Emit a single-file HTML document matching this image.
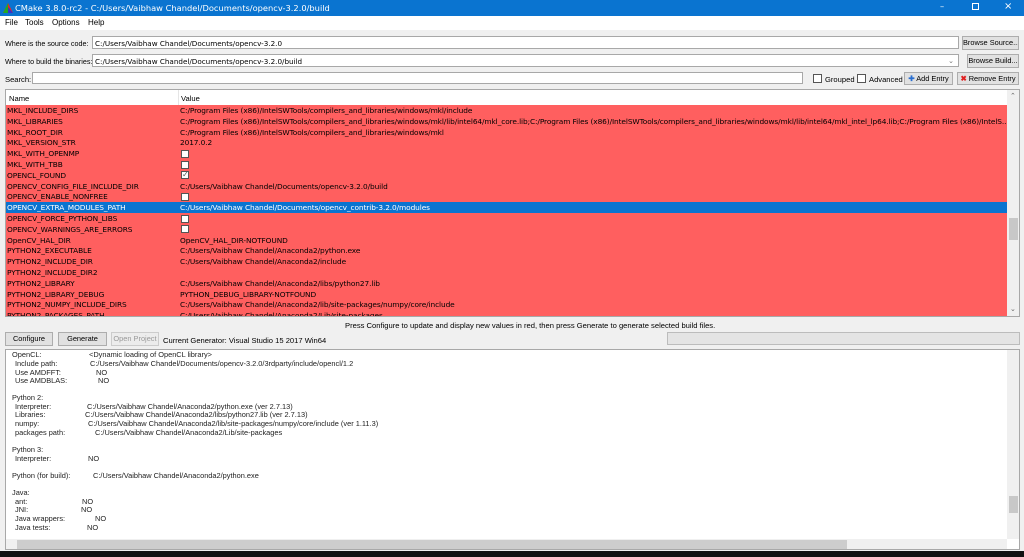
<!DOCTYPE html>
<html><head><meta charset="utf-8"><style>
*{margin:0;padding:0;box-sizing:border-box}
body{width:1024px;height:557px;overflow:hidden;background:#f0f0f0;font-family:"Liberation Sans",sans-serif;font-size:7.6px;color:#000;position:relative}
.a{position:absolute;white-space:nowrap}
.title{left:0;top:0;width:1024px;height:16px;background:#0a74d0;color:#fff;font-size:8.3px;font-family:"DejaVu Sans",sans-serif}
.box{position:absolute;background:#fff;border:1px solid #a8a8a8}
.box span{font-family:"DejaVu Sans",sans-serif;font-size:7.2px}
.btn{position:absolute;background:#e1e1e1;border:1px solid #adadad;text-align:center;line-height:12px;white-space:nowrap;overflow:hidden;font-size:7.4px}
.row{position:absolute;left:6px;width:1001px;height:10.8px;line-height:11.6px;font-family:"DejaVu Sans",sans-serif;font-size:7.4px;letter-spacing:-0.1px}
.row span{position:absolute;white-space:nowrap}
.cb{position:absolute;left:175px;width:8px;height:8px;background:#fff;border:1px solid #555;top:1.5px}
.out{position:absolute;white-space:nowrap;font-size:7.4px;color:#222}
</style></head><body>
<div class="a title"><svg style="position:absolute;left:3px;top:3px" width="10" height="10"><polygon points="5,0 10,10 0,10" fill="#e22"/><polygon points="5,0 5,10 0,10" fill="#2a2"/><polygon points="5,4 10,10 5,10" fill="#33c"/></svg><span style="position:absolute;left:15px;top:3px">CMake 3.8.0-rc2 - C:/Users/Vaibhaw Chandel/Documents/opencv-3.2.0/build</span>
<span style="position:absolute;left:940px;top:1px">&#8211;</span><span style="position:absolute;left:972px;top:3px;width:7px;height:7px;border:1px solid #fff"></span><span style="position:absolute;left:1004px;top:1px;font-size:10px">&#215;</span></div>
<div class="a" style="left:0;top:16px;width:1024px;height:14px;background:#fff"></div>
<div class="a" style="left:5px;top:18px;font-size:8px">File</div><div class="a" style="left:25px;top:18px;font-size:8px">Tools</div><div class="a" style="left:52px;top:18px;font-size:8px">Options</div><div class="a" style="left:88px;top:18px;font-size:8px">Help</div>
<div class="a" style="left:5px;top:39px;font-size:7.2px">Where is the source code:</div>
<div class="box" style="left:92px;top:36px;width:867px;height:13px"><span class="a" style="left:2px;top:2px">C:/Users/Vaibhaw Chandel/Documents/opencv-3.2.0</span></div>
<div class="btn" style="left:962px;top:36px;width:57px;height:14px">Browse Source...</div>
<div class="a" style="left:5px;top:57px;font-size:7.2px">Where to build the binaries:</div>
<div class="box" style="left:92px;top:54px;width:867px;height:13px"><span class="a" style="left:2px;top:2px">C:/Users/Vaibhaw Chandel/Documents/opencv-3.2.0/build</span><span class="a" style="left:855px;top:1px;color:#777">&#8964;</span></div>
<div class="btn" style="left:967px;top:54px;width:52px;height:14px">Browse Build...</div>
<div class="a" style="left:5px;top:75px">Search:</div>
<div class="box" style="left:32px;top:72px;width:771px;height:12px"></div>
<div class="a" style="left:813px;top:74px;width:9px;height:9px;border:1px solid #555;background:#fff"></div><div class="a" style="left:825px;top:75px">Grouped</div>
<div class="a" style="left:857px;top:74px;width:9px;height:9px;border:1px solid #555;background:#fff"></div><div class="a" style="left:869px;top:75px">Advanced</div>
<div class="btn" style="left:904px;top:72px;width:49px;height:13px"><span style="color:#2a6fd0;font-weight:bold">&#10010;</span> Add Entry</div>
<div class="btn" style="left:957px;top:72px;width:62px;height:13px"><span style="color:#e02020;font-weight:bold">&#10006;</span> Remove Entry</div>
<div class="box" style="left:5px;top:89px;width:1015px;height:228px"></div>
<div class="a" style="left:6px;top:90px;width:1001px;height:15px;background:#fff"></div>
<div class="a" style="left:178px;top:90px;width:1px;height:15px;background:#e5e5e5"></div>
<div class="a" style="left:9px;top:94px">Name</div><div class="a" style="left:181px;top:94px">Value</div>
<div class="a" style="left:6px;top:105px;width:1001px;height:211px;background:#ff5f5f;overflow:hidden">
<div id="rows"></div>
</div>
<div class="a" style="left:1007px;top:90px;width:12px;height:226px;background:#f0f0f0"></div>
<div class="a" style="left:1009px;top:218px;width:9px;height:22px;background:#c8c8c8"></div>
<div class="a" style="left:1010px;top:92px;color:#666;font-size:7px">&#8963;</div>
<div class="a" style="left:1010px;top:305px;color:#666;font-size:7px">&#8964;</div>
<div class="a" style="left:345px;top:321px">Press Configure to update and display new values in red, then press Generate to generate selected build files.</div>
<div class="btn" style="left:5px;top:332px;width:48px;height:14px">Configure</div>
<div class="btn" style="left:58px;top:332px;width:49px;height:14px">Generate</div>
<div class="btn" style="left:111px;top:332px;width:48px;height:14px;color:#999;background:#ececec;border-color:#ccc">Open Project</div>
<div class="a" style="left:163px;top:336px">Current Generator: Visual Studio 15 2017 Win64</div>
<div class="a" style="left:667px;top:332px;width:353px;height:13px;background:#e4e4e4;border:1px solid #bcbcbc"></div>
<div class="box" style="left:5px;top:349px;width:1015px;height:201px"></div>
<div class="a" style="left:1007px;top:350px;width:12px;height:189px;background:#f0f0f0"></div>
<div class="a" style="left:1009px;top:496px;width:9px;height:17px;background:#c8c8c8"></div>
<div class="a" style="left:6px;top:539px;width:1001px;height:10px;background:#f0f0f0"></div>
<div class="a" style="left:17px;top:540px;width:830px;height:9px;background:#cdcdcd"></div>
<div class="a" style="left:0;top:551px;width:1024px;height:6px;background:#111"></div>
<div id="out"></div>
<script>
var rows=[["MKL_INCLUDE_DIRS","C:/Program Files (x86)/IntelSWTools/compilers_and_libraries/windows/mkl/include"],
["MKL_LIBRARIES","C:/Program Files (x86)/IntelSWTools/compilers_and_libraries/windows/mkl/lib/intel64/mkl_core.lib;C:/Program Files (x86)/IntelSWTools/compilers_and_libraries/windows/mkl/lib/intel64/mkl_intel_lp64.lib;C:/Program Files (x86)/IntelS..."],
["MKL_ROOT_DIR","C:/Program Files (x86)/IntelSWTools/compilers_and_libraries/windows/mkl"],
["MKL_VERSION_STR","2017.0.2"],["MKL_WITH_OPENMP",0],["MKL_WITH_TBB",0],["OPENCL_FOUND",1],
["OPENCV_CONFIG_FILE_INCLUDE_DIR","C:/Users/Vaibhaw Chandel/Documents/opencv-3.2.0/build"],
["OPENCV_ENABLE_NONFREE",0],["OPENCV_EXTRA_MODULES_PATH","C:/Users/Vaibhaw Chandel/Documents/opencv_contrib-3.2.0/modules"],
["OPENCV_FORCE_PYTHON_LIBS",0],["OPENCV_WARNINGS_ARE_ERRORS",0],["OpenCV_HAL_DIR","OpenCV_HAL_DIR-NOTFOUND"],
["PYTHON2_EXECUTABLE","C:/Users/Vaibhaw Chandel/Anaconda2/python.exe"],["PYTHON2_INCLUDE_DIR","C:/Users/Vaibhaw Chandel/Anaconda2/include"],
["PYTHON2_INCLUDE_DIR2",""],["PYTHON2_LIBRARY","C:/Users/Vaibhaw Chandel/Anaconda2/libs/python27.lib"],
["PYTHON2_LIBRARY_DEBUG","PYTHON_DEBUG_LIBRARY-NOTFOUND"],["PYTHON2_NUMPY_INCLUDE_DIRS","C:/Users/Vaibhaw Chandel/Anaconda2/lib/site-packages/numpy/core/include"],
["PYTHON2_PACKAGES_PATH","C:/Users/Vaibhaw Chandel/Anaconda2/Lib/site-packages"]];
var h="";rows.forEach(function(r,i){var sel=i==9;
h+='<div class="row" style="left:0;top:'+(i*10.8)+'px;'+(sel?'background:#0a74d0;color:#fff':'')+'"><span style="left:1px">'+r[0]+'</span>';
if(r[1]===0||r[1]===1)h+='<div class="cb">'+(r[1]?'<span style="position:absolute;left:0;top:-3px;font-size:8px;color:#555">&#10003;</span>':'')+'</div>';
else h+='<span style="left:174px">'+r[1]+'</span>';h+='</div>'});
document.getElementById("rows").innerHTML=h;
var o=[[354,12,"OpenCL:",89,"&lt;Dynamic loading of OpenCL library&gt;"],[363,15,"Include path:",90,"C:/Users/Vaibhaw Chandel/Documents/opencv-3.2.0/3rdparty/include/opencl/1.2"],
[372,15,"Use AMDFFT:",96,"NO"],[380,15,"Use AMDBLAS:",98,"NO"],[397,12,"Python 2:",0,""],
[406,15,"Interpreter:",87,"C:/Users/Vaibhaw Chandel/Anaconda2/python.exe (ver 2.7.13)"],[414,15,"Libraries:",85,"C:/Users/Vaibhaw Chandel/Anaconda2/libs/python27.lib (ver 2.7.13)"],
[423,15,"numpy:",88,"C:/Users/Vaibhaw Chandel/Anaconda2/lib/site-packages/numpy/core/include (ver 1.11.3)"],[432,15,"packages path:",95,"C:/Users/Vaibhaw Chandel/Anaconda2/Lib/site-packages"],
[449,12,"Python 3:",0,""],[458,15,"Interpreter:",88,"NO"],[475,12,"Python (for build):",93,"C:/Users/Vaibhaw Chandel/Anaconda2/python.exe"],
[492,12,"Java:",0,""],[501,15,"ant:",82,"NO"],[509,15,"JNI:",81,"NO"],[518,15,"Java wrappers:",95,"NO"],[527,15,"Java tests:",87,"NO"]];
var s="";o.forEach(function(l){s+='<div class="out" style="left:'+l[1]+'px;top:'+(l[0]-4)+'px">'+l[2]+'</div>';if(l[4])s+='<div class="out" style="left:'+l[3]+'px;top:'+(l[0]-4)+'px">'+l[4]+'</div>'});
document.getElementById("out").innerHTML=s;
</script>
</body></html>
